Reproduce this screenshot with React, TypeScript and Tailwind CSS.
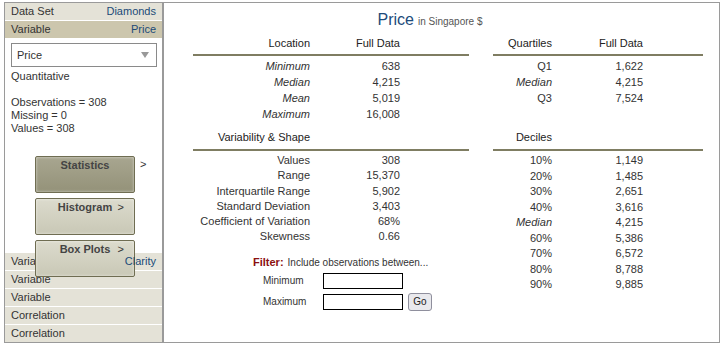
import React from "react";

const loc = [
  ["Minimum", "638", true],
  ["Median", "4,215", true],
  ["Mean", "5,019", true],
  ["Maximum", "16,008", true],
] as const;
const quart = [
  ["Q1", "1,622", false],
  ["Median", "4,215", true],
  ["Q3", "7,524", false],
] as const;
const vari = [
  ["Values", "308"],
  ["Range", "15,370"],
  ["Interquartile Range", "5,902"],
  ["Standard Deviation", "3,403"],
  ["Coefficient of Variation", "68%"],
  ["Skewness", "0.66"],
];
const dec = [
  ["10%", "1,149"],
  ["20%", "1,485"],
  ["30%", "2,651"],
  ["40%", "3,616"],
  ["Median", "4,215"],
  ["60%", "5,386"],
  ["70%", "6,572"],
  ["80%", "8,788"],
  ["90%", "9,885"],
];

function Row({
  a,
  b,
  it,
  lw,
  vw,
  h,
}: {
  a: string;
  b: string;
  it?: boolean;
  lw: string;
  vw: string;
  h: string;
}) {
  return (
    <div className={`flex ${h} text-[#333]`}>
      <div className={`${lw} text-right ${it ? "italic" : ""}`}>{a}</div>
      <div className={`${vw} text-right`}>{b}</div>
    </div>
  );
}

function SideRow({ left, right, dark }: { left: string; right?: string; dark?: boolean }) {
  return (
    <div
      className={`h-[18px] border-b border-white flex items-center justify-between px-[6px] ${
        dark ? "bg-[#ccc6ad]" : "bg-[#e4e2d7]"
      }`}
    >
      <span className="text-[#333]">{left}</span>
      {right && <span className="relative z-10 text-[#1b4a78]">{right}</span>}
    </div>
  );
}

function MenuBtn({ label, dark, arrow }: { label: string; dark?: boolean; arrow?: boolean }) {
  return (
    <div
      className={`relative w-[100px] h-[37px] border border-[#6f6d52] rounded-[2px] shadow-[inset_0_0_3px_rgba(255,255,255,0.6)] ${
        dark
          ? "bg-gradient-to-b from-[#a8a690] to-[#949279]"
          : "bg-gradient-to-b from-[#dcdbcd] to-[#c9c8b6]"
      }`}
    >
      <div className="text-center font-bold text-[#444] text-[11px] leading-[14px] pt-[1px]">{label}</div>
      {arrow && <span className="absolute right-[10px] top-[1px] text-[#333] leading-[14px]">&gt;</span>}
    </div>
  );
}

export default function App() {
  return (
    <div className="w-[722px] h-[351px] bg-white font-['Liberation_Sans',Arial,sans-serif] text-[11px] pt-[2px] pl-[4px]">
      <div className="w-[716px] h-[341px] border border-[#9a9a9a] flex">
        {/* Sidebar */}
        <div className="relative w-[159px] border-r-2 border-[#9a9a9a] flex flex-col">
          <SideRow left="Data Set" right="Diamonds" />
          <SideRow left="Variable" right="Price" dark />
          <div className="mt-[4px] ml-[6px] w-[146px] h-[24px] border border-[#8a8a8a] flex items-center justify-between px-[5px]">
            <span className="text-[#333]">Price</span>
            <svg width="8" height="6" viewBox="0 0 8 6" className="mr-[2px]">
              <path d="M0 0 L8 0 L4 6 Z" fill="#999" />
            </svg>
          </div>
          <div className="ml-[6px] mt-[3px] leading-[13px] text-[#333]">Quantitative</div>
          <div className="ml-[6px] mt-[13px] leading-[13px] text-[#333]">
            <div>Observations = 308</div>
            <div>Missing = 0</div>
            <div>Values = 308</div>
          </div>
          {/* overlay menu */}
          <div className="absolute left-[30px] top-[153px] flex flex-col gap-[5px]">
            <div className="relative">
              <MenuBtn label="Statistics" dark />
              <span className="absolute left-[105px] top-[1px] text-[#333] leading-[14px]">&gt;</span>
            </div>
            <MenuBtn label="Histogram" arrow />
            <MenuBtn label="Box Plots" arrow />
          </div>
          <div className="mt-auto">
            <SideRow left="Variable" right="Clarity" />
            <SideRow left="Variable" />
            <SideRow left="Variable" />
            <SideRow left="Correlation" />
            <div className="h-[17px] flex items-center px-[6px] bg-[#e4e2d7] text-[#333]">Correlation</div>
          </div>
        </div>

        {/* Main */}
        <div className="flex-1 pt-[5px] pl-[29px]">
          <div className="h-[20px] flex items-baseline justify-center pr-[52px]">
            <span className="text-[16px] text-[#1d4b7b]">Price</span>
            <span className="text-[10px] text-[#555] ml-[4px]">in Singapore $</span>
          </div>
          {/* band 1 */}
          <div className="flex gap-[24px] mt-[7px]">
            <div className="w-[276px]">
              <div className="flex h-[16px] leading-[16px] text-[#222]">
                <div className="w-[117px] text-right">Location</div>
                <div className="w-[90px] text-right">Full Data</div>
              </div>
              <div className="mt-[3px] h-[2px] bg-[#7f7d62]" />
              <div className="mt-[2px]">
                {loc.map(([a, b, it]) => (
                  <Row key={a} a={a} b={b} it={it} lw="w-[117px]" vw="w-[90px]" h="h-[16px] leading-[16px]" />
                ))}
              </div>
            </div>
            <div className="w-[210px]">
              <div className="flex h-[16px] leading-[16px] text-[#222]">
                <div className="w-[59px] text-right">Quartiles</div>
                <div className="w-[91px] text-right">Full Data</div>
              </div>
              <div className="mt-[3px] h-[2px] bg-[#7f7d62]" />
              <div className="mt-[2px]">
                {quart.map(([a, b, it]) => (
                  <Row key={a} a={a} b={b} it={it} lw="w-[59px]" vw="w-[91px]" h="h-[16px] leading-[16px]" />
                ))}
              </div>
            </div>
          </div>
          {/* band 2 */}
          <div className="flex gap-[24px] mt-[7px]">
            <div className="w-[276px]">
              <div className="flex h-[16px] leading-[16px] text-[#222]">
                <div className="w-[117px] text-right">Variability &amp; Shape</div>
              </div>
              <div className="mt-[4px] h-[2px] bg-[#7f7d62]" />
              <div className="mt-[2px]">
                {vari.map(([a, b]) => (
                  <Row key={a} a={a} b={b} lw="w-[117px]" vw="w-[90px]" h="h-[15.25px] leading-[15.25px]" />
                ))}
              </div>
              <div className="mt-[9px] pl-[60px] h-[16px] leading-[16px] text-[10px]">
                <span className="text-[#8b1010] font-bold text-[11px]">Filter:</span>
                <span className="text-[#333] ml-[4px]">Include observations between...</span>
              </div>
              <div className="mt-[3px] flex items-center h-[16px]">
                <span className="w-[130px] pl-[70px] text-[#333] text-[10px]">Minimum</span>
                <div className="w-[80px] h-[16px] border border-black bg-white" />
              </div>
              <div className="mt-[5px] flex items-center h-[16px]">
                <span className="w-[130px] pl-[70px] text-[#333] text-[10px]">Maximum</span>
                <div className="w-[80px] h-[16px] border border-black bg-white" />
                <div className="ml-[5px] w-[24px] h-[18px] border border-[#8f8f9d] rounded-[3px] bg-[#e9e9ed] flex items-center justify-center text-[10px] text-[#222]">
                  Go
                </div>
              </div>
            </div>
            <div className="w-[210px]">
              <div className="flex h-[16px] leading-[16px] text-[#222]">
                <div className="w-[59px] text-right">Deciles</div>
              </div>
              <div className="mt-[4px] h-[2px] bg-[#7f7d62]" />
              <div className="mt-[2px]">
                {dec.map(([a, b]) => (
                  <Row
                    key={a}
                    a={a}
                    b={b}
                    it={a === "Median"}
                    lw="w-[59px]"
                    vw="w-[91px]"
                    h="h-[15.5px] leading-[15.5px]"
                  />
                ))}
              </div>
            </div>
          </div>
        </div>
      </div>
    </div>
  );
}
